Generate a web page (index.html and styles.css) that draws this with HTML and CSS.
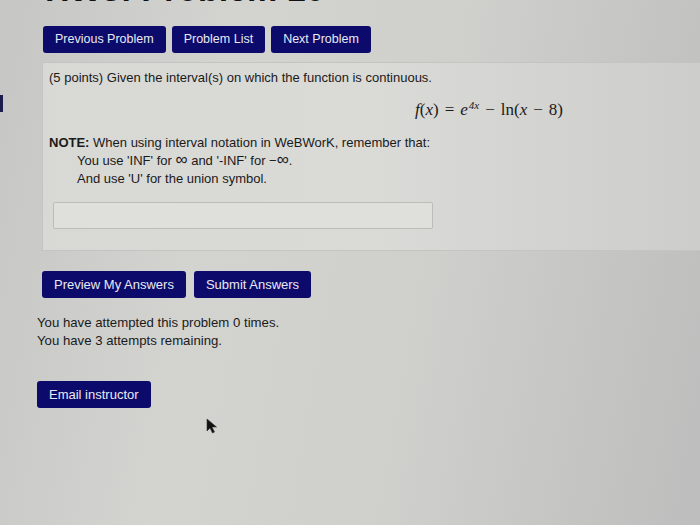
FILE: index.html
```html
<!DOCTYPE html>
<html>
<head>
<meta charset="utf-8">
<link rel="stylesheet" href="styles.css">
</head>
<body>
<div class="page">
  <div class="edge"></div>
  <h1 class="title">HW5: Problem 10</h1>
  <div class="nav">
    <span class="btn">Previous Problem</span>
    <span class="btn">Problem List</span>
    <span class="btn">Next Problem</span>
  </div>
  <div class="problem">
    <p class="intro">(5 points) Given the interval(s) on which the function is continuous.</p>
    <div class="formula"><i>f</i>(<i>x</i>)<span class="op">=</span><i>e</i><sup><i>4x</i></sup><span class="op">&minus;</span>ln(<i>x</i><span class="op">&minus;</span>8)</div>
    <p class="note"><b>NOTE:</b> When using interval notation in WeBWorK, remember that:</p>
    <p class="indent">You use 'INF' for <span class="inf">&infin;</span> and '-INF' for &minus;<span class="inf">&infin;</span>.</p>
    <p class="indent">And use 'U' for the union symbol.</p>
    <div class="answer"></div>
  </div>
  <div class="actions">
    <span class="btn">Preview My Answers</span>
    <span class="btn">Submit Answers</span>
  </div>
  <p class="attempts">You have attempted this problem 0 times.<br>You have 3 attempts remaining.</p>
  <div class="email"><span class="btn">Email instructor</span></div>
  <svg class="cursor" width="12" height="16" viewBox="0 0 12 16"><path d="M1 1 L1 13 L4 10 L6.5 15 L8.5 14 L6 9 L10.5 9 Z" fill="#111" stroke="#333" stroke-width="0.6"/></svg>
</div>
</body>
</html>
```
FILE: styles.css
```css
html, body {
  margin: 0;
  padding: 0;
}
body {
  width: 700px;
  height: 525px;
  overflow: hidden;
  font-family: "Liberation Sans", Arial, sans-serif;
  color: #1a1a1a;
  background: linear-gradient(100deg, #c6c7c4 0%, #d3d3d0 30%, #cfcfcc 60%, #bdbdbd 100%);
}
.page {
  position: relative;
  display: flow-root;
  height: 525px;
  padding-left: 37px;
  box-sizing: border-box;
}
.edge {
  position: absolute;
  left: 0;
  top: 95px;
  width: 3px;
  height: 17px;
  background: #1c1c4e;
}
.title {
  margin: -30px 0 0 8px;
  font-size: 34px;
  font-weight: bold;
  line-height: 38px;
  color: #111;
}
.nav {
  display: flex;
  gap: 6px;
  margin: 18px 0 0 6px;
}
.btn {
  display: inline-block;
  background: #0c0b6c;
  color: #e9e9f2;
  font-size: 12.5px;
  line-height: 27px;
  height: 27px;
  padding: 0 12px;
  border-radius: 3px;
}
.problem {
  margin-top: 9px;
  margin-left: 5px;
  background: linear-gradient(90deg, #d8d8d5 0%, #dadad7 50%, #cdcdcb 100%);
  border: 1px solid #c4c4c1;
  border-right: none;
  padding: 6px 0 21px 6px;
  height: 160px;
}
.problem p {
  margin: 0;
  font-size: 13px;
  line-height: 18px;
}
.formula {
  font-family: "Liberation Serif", "Times New Roman", serif;
  font-size: 17px;
  margin: 14px 0 0 366px;
  line-height: 18px;
}
.formula .op {
  margin: 0 6px;
}
.formula sup {
  font-size: 11px;
  vertical-align: 6px;
  line-height: 0;
  margin-left: 1px;
}
.problem .note {
  margin-top: 15px;
}
.problem .indent {
  padding-left: 28px;
}
.inf {
  font-size: 17px;
  line-height: 0;
}
.answer {
  margin: 14px 0 0 4px;
  width: 378px;
  height: 25px;
  background: #dfdfdc;
  border: 1px solid #bcbcb9;
  border-radius: 2px;
}
.actions {
  display: flex;
  gap: 8px;
  margin: 20px 0 0 5px;
}
.actions .btn {
  font-size: 13px;
  padding: 0 12px;
}
.attempts {
  margin: 16px 0 0 0;
  font-size: 13.2px;
  line-height: 18px;
}
.email {
  margin-top: 31px;
}
.email .btn {
  font-size: 13px;
}
.cursor {
  position: absolute;
  left: 206px;
  top: 418px;
}
```
